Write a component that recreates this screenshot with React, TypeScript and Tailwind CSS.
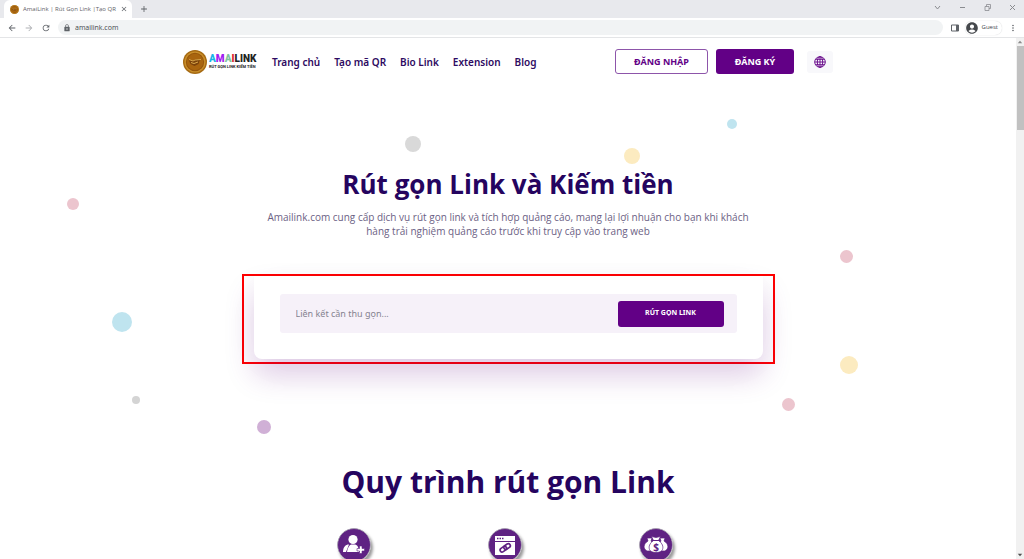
import React from "react";
import {
  MdArrowBack,
  MdArrowForward,
  MdRefresh,
  MdLock,
  MdClose,
  MdAdd,
  MdMoreVert,
  MdAccountCircle,
} from "react-icons/md";

const navLinks = ["Trang chủ", "Tạo mã QR", "Bio Link", "Extension", "Blog"];

const dots = [
  "left-[405px] top-[98px] size-4 bg-[#d9d9d9]",
  "left-[624px] top-[110px] size-4 bg-[#fcebc0]",
  "left-[727px] top-[81px] size-[10px] bg-[#bfe4ef]",
  "left-[67px] top-[160px] size-3 bg-[#ecc5ce]",
  "left-[840px] top-[212px] size-[13px] bg-[#ecc5ce]",
  "left-[112px] top-[274px] size-5 bg-[#bfe4ef]",
  "left-[840px] top-[318px] size-[18px] bg-[#fcebc0]",
  "left-[132px] top-[358px] size-2 bg-[#d4d4d4]",
  "left-[782px] top-[360px] size-[13px] bg-[#ecc5ce]",
  "left-[257px] top-[382px] size-[14px] bg-[#d0b0d6]",
];

const Coin: React.FC<{ className: string }> = ({ className }) => (
  <svg viewBox="0 0 24 24" className={className} aria-hidden="true">
    <circle cx="12" cy="12" r="12" fill="#a66a12" />
    <circle cx="12" cy="12" r="10.6" fill="#c98f2b" />
    <circle cx="12" cy="12" r="9.2" fill="#96560c" />
    <circle cx="12" cy="12" r="8.2" fill="#a9650f" />
    <path d="M5.5 9.5 10 10.5l2-1 6.500-.5-2 2-1 3-4 2-4-2z" fill="#7b430b" />
    <path d="M6 9.500 10 11l2-1 6-.5M8 12.500l3 1 4-1.500" fill="none" stroke="#dba94b" strokeWidth="1" />
  </svg>
);

const Logo: React.FC = () => (
  <a href="#" className="flex w-[72px] items-center gap-[2px]">
    <Coin className="size-6 shrink-0" />
    <span className="flex flex-col font-[Roboto,sans-serif] font-black text-[#222222]">
      <span className="text-[10px] leading-[10px]">
        <span className="text-[#18b4e8]">A</span>
        <span className="text-[#a020f0]">M</span>
        <span className="text-[#7fc4a0]">A</span>
        <span className="text-[#e02030]">I</span>LINK
      </span>
      <span className="whitespace-nowrap text-[4px] font-bold leading-[6px]">RÚT GỌN LINK KIẾM TIỀN</span>
    </span>
  </a>
);

const BrowserBar: React.FC = () => (
  <div className="shrink-0 border-b border-[#e4e5e7] text-[#5f6368]">
    <div className="flex h-[18px] items-start bg-[#e8e9ed]">
      <div className="ml-1 flex h-[18px] w-32 items-center gap-1 rounded-t-md bg-white pl-[6px] pr-1">
        <Coin className="size-[9px] shrink-0" />
        <span className="flex-1 whitespace-nowrap text-[6px]">AmaiLink | Rút Gọn Link |Tạo QR</span>
        <button aria-label="Close tab"><MdClose size={8} /></button>
      </div>
      <button aria-label="New tab" className="ml-[7px] flex h-[18px] items-center"><MdAdd size={10} /></button>
      <div className="ml-auto flex h-[15px] items-center gap-[18px] pr-2 text-[#8a8c90]">
        <button aria-label="Search tabs">
          <svg viewBox="0 0 7 7" className="block size-[7px]" fill="none" stroke="currentColor"><path d="m1 2 2.500 3L6 2" /></svg>
        </button>
        <button aria-label="Minimize">
          <svg viewBox="0 0 7 7" className="block size-[7px]" fill="none" stroke="currentColor"><path d="M1 3.500h5" /></svg>
        </button>
        <button aria-label="Restore">
          <svg viewBox="0 0 7 7" className="block size-[7px]" fill="none" stroke="currentColor"><path d="M1 2.500h4v4H1zM2.500 2.500v-2h4v4H5" strokeWidth=".8" /></svg>
        </button>
        <button aria-label="Close">
          <svg viewBox="0 0 7 7" className="block size-[7px]" fill="none" stroke="currentColor"><path d="m1 1 5 5m0-5L1 6" /></svg>
        </button>
      </div>
    </div>
    <div className="flex h-[19px] items-center bg-white pl-[7px] pr-[6px]">
      <button aria-label="Back"><MdArrowBack size={10} /></button>
      <button aria-label="Forward" className="ml-[7px] text-[#b0b2b5]"><MdArrowForward size={10} /></button>
      <button aria-label="Reload" className="ml-[7px]"><MdRefresh size={10} /></button>
      <div className="ml-[7px] flex h-[15px] min-w-0 flex-1 items-center gap-1 rounded-full bg-[#f1f3f4] px-[5px]">
        <MdLock size={8} className="shrink-0" />
        <input
          aria-label="Address"
          defaultValue="amailink.com"
          className="min-w-0 flex-1 bg-transparent text-[7px] leading-3 text-[#45484c] outline-none"
        />
      </div>
      <button aria-label="Side panel" className="ml-2">
        <svg viewBox="0 0 8 8" className="block size-2"><path d="M.5 1h7v6h-7z" fill="none" stroke="currentColor" /><path d="M5 1h3v6H5z" fill="currentColor" /></svg>
      </button>
      <button className="ml-[6px] flex items-center gap-[3px] rounded-full pr-1 text-[6px] text-[#45484c] shadow-[0_0_1px_#c8cacc]">
        <MdAccountCircle size={14} />
        Guest
      </button>
      <button aria-label="Menu" className="ml-[6px]"><MdMoreVert size={10} /></button>
    </div>
  </div>
);

const Scrollbar: React.FC = () => (
  <div className="flex w-2 shrink-0 flex-col items-center bg-[#f1f1f1] text-[#8a8a8a]">
    <svg viewBox="0 0 9 9" className="size-2"><path d="m2 6 2.500-3L7 6z" fill="currentColor" /></svg>
    <div className="h-[84px] w-[7px] bg-[#c1c1c1]" />
    <svg viewBox="0 0 9 9" className="mt-auto size-2"><path d="m2 3 2.500 3L7 3z" fill="#505050" /></svg>
  </div>
);

const Header: React.FC = () => (
  <header className="mx-auto flex w-[650px] items-center pt-[11px]">
    <Logo />
    <nav className="ml-[17px] flex gap-[14px] whitespace-nowrap font-['Noto_Sans',sans-serif] text-[10px] font-semibold leading-6 text-[#2d0a61]">
      {navLinks.map((link) => (
        <a key={link} href="#">{link}</a>
      ))}
    </nav>
    <div className="ml-auto flex items-center whitespace-nowrap font-['Noto_Sans',sans-serif] text-[9px] font-bold leading-4">
      <button className="h-[25px] w-[93px] rounded-[3px] border border-[#8d55aa] text-[#620086]">ĐĂNG NHẬP</button>
      <button className="ml-2 h-[25px] w-[78px] rounded-[3px] bg-[#620086] text-white">ĐĂNG KÝ</button>
      <button aria-label="Language" className="ml-[13px] flex h-[22px] w-[26px] items-center justify-center rounded-[3px] bg-[#f8f8fb] text-[#620086]">
        <svg viewBox="0 0 12 12" className="size-3" fill="none" stroke="currentColor" strokeWidth=".9">
          <circle cx="6" cy="6" r="5.300" />
          <ellipse cx="6" cy="6" rx="2.700" ry="5.300" />
          <path d="M6 .7v10.600M.7 6h10.600M1.500 3.300h9M1.500 8.700h9" />
        </svg>
      </button>
    </div>
  </header>
);

const ShortenForm: React.FC = () => (
  <div className="mx-auto mt-9 h-[90px] w-[533px] border-2 border-[#ff0000] px-[10px]">
    <form
      className="h-[83px] rounded-b-lg bg-white px-[26px] pt-[18px] font-['Noto_Sans',sans-serif] shadow-[0_16px_30px_rgba(98,0,134,0.2),0_8px_50px_rgba(0,0,0,0.02)]"
      onSubmit={(e) => e.preventDefault()}
    >
      <div className="flex h-[39px] items-center rounded-[3px] bg-[#f6f1f9] pl-4 pr-[13px]">
        <input
          aria-label="Liên kết cần thu gọn"
          placeholder="Liên kết cần thu gọn..."
          className="min-w-0 flex-1 bg-transparent text-[9px] leading-4 outline-none placeholder:text-[#858390]"
        />
        <button className="h-[26px] w-[106px] rounded-[3px] bg-[#620086] text-[7px] font-bold text-white">RÚT GỌN LINK</button>
      </div>
    </form>
  </div>
);

const UserIcon = () => (
  <g fill="white">
    <circle cx="16" cy="11.500" r="4.600" />
    <path d="M6 24c0-5 2.500-7.500 6-7.500L9 24z" />
    <path d="M10 24c.5-4 2-6.500 4-7.500h4c2.500.5 3.500 2.500 4 7.500z" />
    <path d="M22.500 18h2.500v2.500h2.500V23H25v2.500h-2.500V23H20v-2.500h2.500z" stroke="#5f2283" strokeWidth=".6" />
  </g>
);

const LinkIcon = () => (
  <g>
    <path d="M7 8h20v5H7zM7 14h20v13H7z" fill="white" />
    <path d="M9 10.500h1.500m1 0H13m1 0h1.500" stroke="#5f2283" strokeWidth="1.500" />
    <g transform="rotate(-35 17 20)" fill="none" stroke="#5f2283" strokeWidth="1.700">
      <rect x="11.500" y="18" width="7" height="4" rx="2" />
      <rect x="16" y="18" width="7" height="4" rx="2" />
    </g>
  </g>
);

const MoneyIcon = () => (
  <g fill="white" stroke="#5f2283" strokeWidth=".7">
    <path d="M9 13 8 10h5l-1 3c3 3 3 7 1 10H8c-4-2-4-7 1-10zM25 13l1-3h-5l1 3c-3 3-3 7-1 10h5c4-2 4-7-1-10z" />
    <path d="m14.500 12.500-2-4 4.500 1 4.500-1-2 4c4 3 5 6 4 9-1 4-12 4-13 0-1-3 0-6 4-9z" />
    <path d="M14 12.500h6" strokeWidth="1" />
    <text x="17" y="22.500" textAnchor="middle" fontSize="10" fontWeight="700" fill="#5f2283" stroke="none">$</text>
  </g>
);

const stepIcons = [UserIcon, LinkIcon, MoneyIcon];

const App: React.FC = () => (
  <div className="flex h-screen flex-col overflow-hidden bg-white font-['Open_Sans',sans-serif]">
    <BrowserBar />
    <div className="flex min-h-0 flex-1">
      <main className="relative min-w-0 flex-1 overflow-hidden">
        {dots.map((dot) => (
          <span key={dot} className={`absolute rounded-full ${dot}`} />
        ))}
        <Header />
        <section className="text-center">
          <h1 className="mt-[92px] text-[26px] font-bold leading-9 text-[#25045f]">Rút gọn Link và Kiếm tiền</h1>
          <p className="mt-2 text-[10px] font-medium leading-[14px] text-[#6b6184]">
            Amailink.com cung cấp dịch vụ rút gọn link và tích hợp quảng cáo, mang lại lợi nhuận cho bạn khi khách
            <br />
            hàng trải nghiệm quảng cáo trước khi truy cập vào trang web
          </p>
          <ShortenForm />
        </section>
        <section>
          <h2 className="mt-[97px] text-center text-[30px] font-bold leading-[42px] text-[#25045f]">Quy trình rút gọn Link</h2>
          <div className="mt-[25px] flex justify-center gap-[117px] pr-[6px]">
            {stepIcons.map((Icon, i) => (
              <svg key={i} viewBox="0 0 34 34" className="size-[34px] shrink-0 rounded-full shadow-[2px_3px_3px_rgba(0,0,0,0.4)]" aria-hidden="true">
                <circle cx="17" cy="17" r="16.500" fill="#5f2283" stroke="#a7a0b0" />
                <Icon />
              </svg>
            ))}
          </div>
        </section>
      </main>
      <Scrollbar />
    </div>
  </div>
);

export default App;
